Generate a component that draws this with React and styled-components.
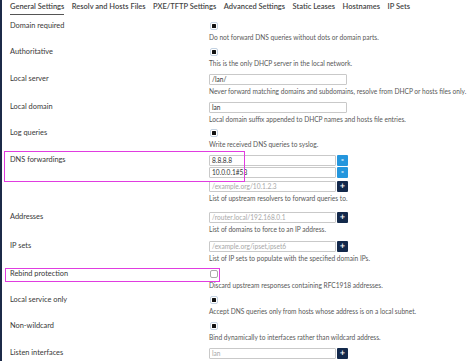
import React from 'react';
import styled, { createGlobalStyle } from 'styled-components';

const GlobalStyle = createGlobalStyle`
  html, body {
    margin: 0;
    padding: 0;
    background: #ffffff;
  }
  body {
    font-family: Lato, "Open Sans", "Liberation Sans", sans-serif;
    color: #333;
  }
`;

const tabs = [
  'General Settings',
  'Resolv and Hosts Files',
  'PXE/TFTP Settings',
  'Advanced Settings',
  'Static Leases',
  'Hostnames',
  'IP Sets',
];

const Page = styled.div`
  width: 474px;
  height: 361px;
  overflow: hidden;
  box-sizing: border-box;
  border-left: 2px solid #1c2a48;
  background: #fff;
`;

const TabBar = styled.div`
  display: flex;
  gap: 7.5px;
  height: 21px;
  padding-left: 8px;
  box-sizing: border-box;
`;

const Tab = styled.div`
  font-size: 7.5px;
  font-weight: 600;
  color: #444;
  padding-top: 3px;
  height: 11px;
  line-height: 8px;
  white-space: nowrap;
  border-bottom: ${(p) => (p.$active ? '1px solid #555' : '1px solid transparent')};
`;

const Row = styled.div`
  position: relative;
  display: flex;
  padding-bottom: ${(p) => p.$pb ?? 5}px;
  padding-top: ${(p) => p.$pt ?? 0}px;
`;

const Label = styled.div`
  width: 207px;
  padding-left: 8px;
  box-sizing: border-box;
  flex-shrink: 0;
  font-size: 7.4px;
  line-height: 10px;
  height: 10px;
  color: #383838;
  white-space: nowrap;
`;

const Field = styled.div`
  display: flex;
  flex-direction: column;
  min-width: 0;
  flex: 1;
`;

const CheckLine = styled.div`
  height: 10px;
  display: flex;
  align-items: center;
`;

const Check = styled.span`
  width: 6px;
  height: 6px;
  border: 1px solid ${(p) => (p.$on ? '#c3d2e2' : '#a9a9a9')};
  border-radius: 2px;
  display: flex;
  align-items: center;
  justify-content: center;
  background: #fff;
  margin-left: 1px;

  &::after {
    content: '';
    display: ${(p) => (p.$on ? 'block' : 'none')};
    width: 4px;
    height: 4px;
    background: #111;
    border-radius: 0.5px;
  }
`;

const Desc = styled.div`
  font-size: 6.6px;
  line-height: 10px;
  height: 10px;
  margin-top: ${(p) => p.$mt ?? 1}px;
  color: #585858;
  white-space: nowrap;
`;

const InputLine = styled.div`
  display: flex;
  height: 11px;
  margin-top: ${(p) => p.$mt ?? 0}px;
`;

const TextBox = styled.div`
  width: ${(p) => p.$w}px;
  height: 11px;
  box-sizing: border-box;
  border: 1px solid #c9c9c9;
  border-radius: 1px;
  font-size: 6.6px;
  line-height: 9px;
  padding-left: 2px;
  color: ${(p) => (p.$ph ? '#a8a8a8' : '#333')};
  background: #fff;
  white-space: nowrap;
  overflow: hidden;
`;

const Btn = styled.div`
  width: 11px;
  height: 11px;
  margin-left: 1px;
  border-radius: 1px;
  background: ${(p) => (p.$add ? '#13294b' : '#2496dd')};
  color: #fff;
  font-size: 7px;
  font-weight: 700;
  line-height: 11px;
  text-align: center;
  font-family: "DejaVu Sans", sans-serif;
`;

const Highlight = styled.div`
  position: absolute;
  left: ${(p) => p.$x}px;
  top: ${(p) => p.$y}px;
  width: ${(p) => p.$w}px;
  height: ${(p) => p.$h}px;
  box-sizing: border-box;
  border: 1.5px solid #e03de0;
  pointer-events: none;
`;

const CheckRow = ({ label, on, desc, pb, children }) => (
  <Row $pb={pb}>
    <Label>{label}</Label>
    <Field>
      <CheckLine>
        <Check $on={on} />
      </CheckLine>
      <Desc>{desc}</Desc>
    </Field>
    {children}
  </Row>
);

const ListRow = ({ label, values, placeholder, desc, pb, children }) => (
  <Row $pb={pb} $pt={1}>
    <Label>{label}</Label>
    <Field>
      {values.map((v, i) => (
        <InputLine key={v} $mt={i ? 1 : 0}>
          <TextBox $w={127}>{v}</TextBox>
          <Btn>-</Btn>
        </InputLine>
      ))}
      <InputLine $mt={values.length ? 3 : 0}>
        <TextBox $w={127} $ph>{placeholder}</TextBox>
        <Btn $add>+</Btn>
      </InputLine>
      {desc && <Desc>{desc}</Desc>}
    </Field>
    {children}
  </Row>
);

export default function App() {
  return (
    <Page>
      <GlobalStyle />
      <TabBar>
        {tabs.map((t, i) => (
          <Tab key={t} $active={i === 0}>{t}</Tab>
        ))}
      </TabBar>

      <CheckRow label="Domain required" on desc="Do not forward DNS queries without dots or domain parts." />
      <CheckRow label="Authoritative" on desc="This is the only DHCP server in the local network." />

      <Row $pt={1} $pb={5}>
        <Label>Local server</Label>
        <Field>
          <TextBox $w={138}>/lan/</TextBox>
          <Desc>Never forward matching domains and subdomains, resolve from DHCP or hosts files only.</Desc>
        </Field>
      </Row>

      <Row $pt={1} $pb={4}>
        <Label>Local domain</Label>
        <Field>
          <TextBox $w={138}>lan</TextBox>
          <Desc>Local domain suffix appended to DHCP names and hosts file entries.</Desc>
        </Field>
      </Row>

      <CheckRow label="Log queries" on desc="Write received DNS queries to syslog." />

      <ListRow
        label="DNS forwardings"
        values={['8.8.8.8', '10.0.0.1#53']}
        placeholder="/example.org/10.1.2.3"
        desc="List of upstream resolvers to forward queries to."
        pb={8}
      >
        <Highlight $x={2} $y={-3} $w={241} $h={31} />
      </ListRow>

      <ListRow
        label="Addresses"
        values={[]}
        placeholder="/router.local/192.168.0.1"
        desc="List of domains to force to an IP address."
        pb={6}
      />
      <ListRow
        label="IP sets"
        values={[]}
        placeholder="/example.org/ipset,ipset6"
        desc="List of IP sets to populate with the specified domain IPs."
        pb={6}
      />

      <CheckRow label="Rebind protection" desc="Discard upstream responses containing RFC1918 addresses.">
        <Highlight $x={3} $y={-1} $w={215} $h={14} />
      </CheckRow>
      <CheckRow label="Local service only" on desc="Accept DNS queries only from hosts whose address is on a local subnet." />
      <CheckRow label="Non-wildcard" on desc="Bind dynamically to interfaces rather than wildcard address." />

      <ListRow label="Listen interfaces" values={[]} placeholder="lan" pb={0} />
    </Page>
  );
}
